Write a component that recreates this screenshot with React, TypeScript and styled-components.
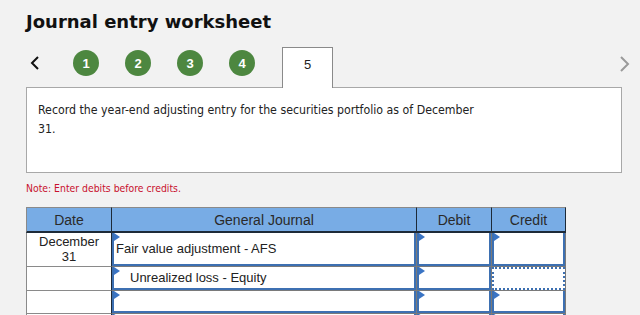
import React from "react";
import styled, { createGlobalStyle } from "styled-components";

const Global = createGlobalStyle`
  html, body { margin: 0; padding: 0; background: #f2f2f2; }
  body { font-family: "DejaVu Sans", Verdana, sans-serif; }
`;

const Page = styled.div`
  width: 640px;
  height: 315px;
  overflow: hidden;
  padding-left: 26px;
  box-sizing: border-box;
`;

const Title = styled.h1`
  margin: 0;
  padding-top: 11px;
  height: 36px;
  box-sizing: border-box;
  font-family: "DejaVu Sans", Verdana, sans-serif;
  font-weight: bold;
  font-size: 18px;
  line-height: 22px;
  color: #111;
`;

const NavRow = styled.div`
  display: flex;
  align-items: flex-start;
  height: 40px;
  margin-top: 11px;
`;

const Chevron = styled.svg<{ $gap: number }>`
  margin-left: ${(p) => p.$gap}px;
  margin-top: 8px;
  flex: none;
`;

const Step = styled.div<{ $first?: boolean }>`
  width: 26px;
  height: 26px;
  border-radius: 50%;
  background: #4d8740;
  color: #fff;
  font-family: "Liberation Sans", Arial, sans-serif;
  font-weight: bold;
  font-size: 13px;
  display: flex;
  align-items: center;
  justify-content: center;
  margin-top: 3px;
  margin-left: ${(p) => (p.$first ? 32 : 26)}px;
  flex: none;
`;

const Tab = styled.div`
  margin-left: 27px;
  width: 51px;
  height: 41px;
  box-sizing: border-box;
  border: 1px solid #8a8a8a;
  border-bottom: none;
  background: #fff;
  font-family: "Liberation Sans", Arial, sans-serif;
  font-size: 13px;
  color: #222;
  text-align: center;
  padding-top: 9px;
  position: relative;
  z-index: 1;
  flex: none;
`;

const Spacer = styled.div`
  flex: 1;
`;

const Panel = styled.div`
  width: 596px;
  height: 86px;
  box-sizing: border-box;
  border: 1px solid #a8a8a8;
  background: #fff;
  padding: 13px 10px 0 11px;
  font-family: "DejaVu Sans Condensed", "DejaVu Sans", Verdana, sans-serif;
  font-stretch: condensed;
  font-size: 12.25px;
  line-height: 19px;
  color: #222;
`;

const Note = styled.div`
  margin-top: 8px;
  font-family: "DejaVu Sans Condensed", "DejaVu Sans", Verdana, sans-serif;
  font-stretch: condensed;
  font-size: 10.35px;
  line-height: 14px;
  color: #c8102e;
`;

const Table = styled.table`
  margin-top: 12px;
  border-collapse: separate;
  border-spacing: 0;
  width: 540px;
  table-layout: fixed;
  font-family: "Liberation Sans", Arial, sans-serif;
  font-size: 13px;
  color: #222;
`;

const Th = styled.th<{ $w: number; $first?: boolean }>`
  width: ${(p) => p.$w}px;
  height: 23px;
  padding: 0;
  background: #78ace5;
  font-weight: normal;
  font-size: 14px;
  color: #2a2a2a;
  border-top: 1px solid #8a8a8a;
  border-left: ${(p) => (p.$first ? "1px solid #8a8a8a" : "none")};
  border-right: 1px solid #1d2a38;
  border-bottom: 2px solid #1d2a38;
  text-align: center;
  vertical-align: middle;
`;

const DateCell = styled.td<{ $h: number }>`
  height: ${(p) => p.$h}px;
  padding: 0;
  background: #fff;
  border-left: 1px solid #8a8a8a;
  border-right: 1px solid #1d2a38;
  border-bottom: 1px solid #8a8a8a;
  text-align: center;
  vertical-align: top;
  line-height: 15px;
  padding-top: 1px;
  box-sizing: border-box;
`;

const FieldCell = styled.td`
  padding: 0;
  border-bottom: 1px solid #7a7a7a;
  border-right: 1px solid #7a7a7a;
  vertical-align: top;
`;

const Field = styled.div<{ $h: number; $dotted?: boolean; $indent?: number }>`
  position: relative;
  height: ${(p) => p.$h}px;
  box-sizing: border-box;
  background: #fff;
  border: 2px ${(p) => (p.$dotted ? "dotted" : "solid")} #3d70b2;
  border-top: ${(p) => (p.$dotted ? "2px dotted #3d70b2" : "none")};
  display: flex;
  align-items: center;
  padding-left: ${(p) => p.$indent ?? 2}px;
  font-size: 13px;
  white-space: nowrap;
`;

const Marker = styled.span`
  position: absolute;
  left: 0;
  top: 0;
  width: 0;
  height: 0;
  border-left: 6px solid #3a74c4;
  border-top: 4px solid transparent;
  border-bottom: 4px solid transparent;
`;

type RowDef = {
  h: number;
  date?: React.ReactNode;
  text?: string;
  indent?: number;
  dottedCredit?: boolean;
};

const rows: RowDef[] = [
  { h: 34, date: <>December<br />31</>, text: "Fair value adjustment - AFS", indent: 2 },
  { h: 24, text: "Unrealized loss - Equity", indent: 16, dottedCredit: true },
  { h: 23 },
  { h: 23 },
];

export default function App() {
  return (
    <Page>
      <Global />
      <Title>Journal entry worksheet</Title>
      <NavRow>
        <Chevron $gap={3} width="12" height="16" viewBox="0 0 12 16">
          <path d="M9 2 L3 8 L9 14" fill="none" stroke="#111" strokeWidth="2" />
        </Chevron>
        <Step $first>1</Step>
        <Step>2</Step>
        <Step>3</Step>
        <Step>4</Step>
        <Tab>5</Tab>
        <Spacer />
        <Chevron $gap={0} width="14" height="18" viewBox="0 0 14 18" style={{ marginRight: 9 }}>
          <path d="M4 2 L11 9 L4 16" fill="none" stroke="#9a9a9a" strokeWidth="2" />
        </Chevron>
      </NavRow>
      <Panel>
        Record the year-end adjusting entry for the securities portfolio as of December
        <br />
        31.
      </Panel>
      <Note>Note: Enter debits before credits.</Note>
      <Table>
        <thead>
          <tr>
            <Th $w={84} $first>Date</Th>
            <Th $w={304}>General Journal</Th>
            <Th $w={74}>Debit</Th>
            <Th $w={73}>Credit</Th>
          </tr>
        </thead>
        <tbody>
          {rows.map((r, i) => (
            <tr key={i}>
              <DateCell $h={r.h}>{r.date}</DateCell>
              <FieldCell>
                <Field $h={r.h - 1} $indent={r.indent}>
                  <Marker />
                  {r.text}
                </Field>
              </FieldCell>
              <FieldCell>
                <Field $h={r.h - 1}>
                  <Marker />
                </Field>
              </FieldCell>
              <FieldCell>
                <Field $h={r.h - 1} $dotted={r.dottedCredit}>
                  {!r.dottedCredit && <Marker />}
                </Field>
              </FieldCell>
            </tr>
          ))}
        </tbody>
      </Table>
    </Page>
  );
}
